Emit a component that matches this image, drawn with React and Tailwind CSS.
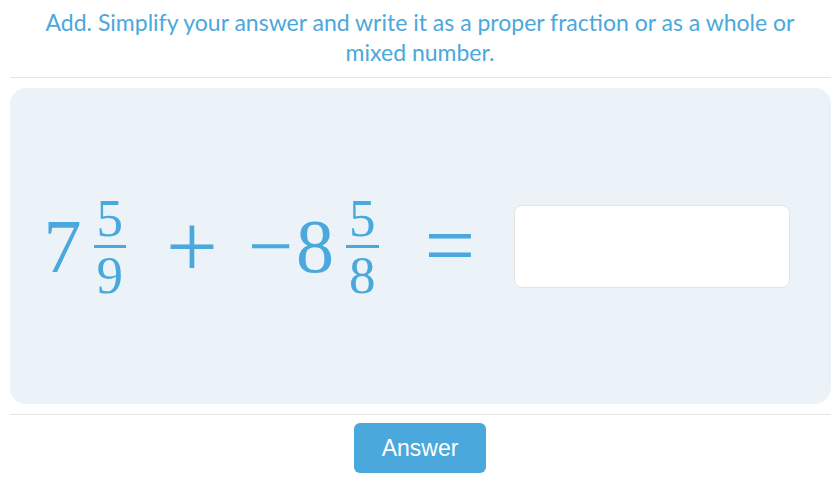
import React from 'react';

const Fraction = ({ num, den }) => (
  <span className="inline-flex flex-col items-center ml-[12px] text-[53px] leading-[46px]">
    <span className="px-[3px]">{num}</span>
    <span className="w-full h-[3px] bg-[#4aa8dc] my-[4px]" />
    <span className="px-[3px]">{den}</span>
  </span>
);

export default function App() {
  return (
    <div className="w-[840px] h-[501px] bg-white flex flex-col items-center">
      <h1 className="w-[780px] pt-[7px] text-center text-[23px] leading-[30px] text-[#4aa8dc] font-['Lato',sans-serif]">
        Add. Simplify your answer and write it as a proper fraction or as a whole or mixed number.
      </h1>
      <div className="w-[821px] h-px bg-[#e5e5e5] mt-[10px]" />
      <div className="w-[821px] h-[316px] mt-[10px] rounded-[16px] bg-[#ebf3f9] flex items-center pl-[34px]">
        <div className="flex items-center text-[#4aa8dc] font-['Liberation_Serif',serif] text-[76px] leading-none">
          <span>7</span>
          <Fraction num="5" den="9" />
          <span className="ml-[40px] text-[92px]">+</span>
          <span className="ml-[30px] text-[80px]">−</span>
          <span className="ml-[3px]">8</span>
          <Fraction num="5" den="8" />
          <span className="ml-[46px] text-[90px]">=</span>
        </div>
        <div className="ml-[39px] w-[276px] h-[83px] bg-white rounded-[8px] border border-[#e3e3e3]" />
      </div>
      <div className="w-[821px] h-px bg-[#e5e5e5] mt-[10px]" />
      <button className="mt-[8px] w-[132px] h-[50px] rounded-[6px] bg-[#4aa8dc] text-white text-[23px] font-['Liberation_Sans',sans-serif]">
        Answer
      </button>
    </div>
  );
}
